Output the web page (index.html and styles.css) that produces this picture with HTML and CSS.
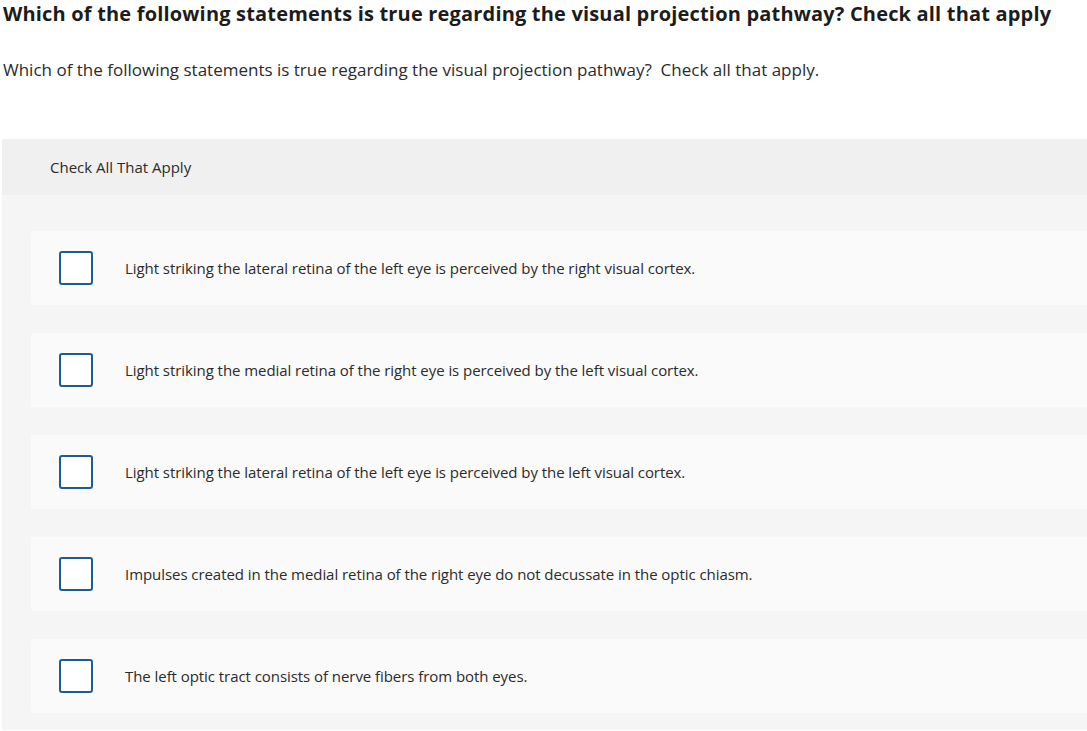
FILE: index.html
```html
<!DOCTYPE html>
<html lang="en">
<head>
    <meta charset="UTF-8">
    <meta name="viewport" content="width=device-width, initial-scale=1.0">
    <title>Visual Projection Pathway</title>
    <link rel="stylesheet" href="styles.css">
</head>
<body>
    <h1 class="title">Which of the following statements is true regarding the visual projection pathway? Check all that apply</h1>

    <p class="prompt">Which of the following statements is true regarding the visual projection pathway?&nbsp; Check all that apply.</p>

    <div class="answers">
        <div class="answers-head">Check All That Apply</div>
        <div class="answers-body">
            <label class="choice">
                <input type="checkbox">
                <span class="box"></span>
                <span class="choice-text">Light striking the lateral retina of the left eye is perceived by the right visual cortex.</span>
            </label>
            <label class="choice">
                <input type="checkbox">
                <span class="box"></span>
                <span class="choice-text">Light striking the medial retina of the right eye is perceived by the left visual cortex.</span>
            </label>
            <label class="choice">
                <input type="checkbox">
                <span class="box"></span>
                <span class="choice-text">Light striking the lateral retina of the left eye is perceived by the left visual cortex.</span>
            </label>
            <label class="choice">
                <input type="checkbox">
                <span class="box"></span>
                <span class="choice-text">Impulses created in the medial retina of the right eye do not decussate in the optic chiasm.</span>
            </label>
            <label class="choice">
                <input type="checkbox">
                <span class="box"></span>
                <span class="choice-text">The left optic tract consists of nerve fibers from both eyes.</span>
            </label>
        </div>
    </div>
</body>
</html>
```

FILE: styles.css
```css
* {
    box-sizing: border-box;
}
body {
    margin: 0;
    font-family: 'Open Sans', 'Noto Sans', sans-serif;
    color: #2b2b2b;
    background: #fff;
    overflow: hidden;
}
.title {
    margin: 0;
    padding-left: 3px;
    font-size: 20px;
    line-height: 27px;
    font-weight: 700;
    letter-spacing: 0.18px;
    color: #1c1c1c;
    white-space: nowrap;
}
.prompt {
    margin: 32px 0 0;
    padding-left: 3px;
    font-size: 17px;
    line-height: 22px;
}
.answers {
    margin: 58px 0 0 2px;
    background: #f5f5f5;
}
.answers-head {
    height: 56px;
    display: flex;
    align-items: center;
    padding-left: 48px;
    background: #f0f0f0;
    font-size: 15px;
}
.answers-body {
    padding: 36px 0 17px 29px;
    display: flex;
    flex-direction: column;
    gap: 28px;
}
.choice {
    height: 74px;
    margin-right: -1px;
    display: flex;
    align-items: center;
    gap: 32px;
    padding-left: 28px;
    background: #fafafa;
    border-radius: 3px 0 0 3px;
    font-size: 15px;
    letter-spacing: -0.06px;
    cursor: pointer;
}
.choice input {
    display: none;
}
.box {
    width: 34px;
    height: 34px;
    flex: none;
    background: #fff;
    border: 2px solid #1f5b93;
    border-radius: 3px;
}
.choice input:checked + .box {
    background: #1f5b93;
}
```
